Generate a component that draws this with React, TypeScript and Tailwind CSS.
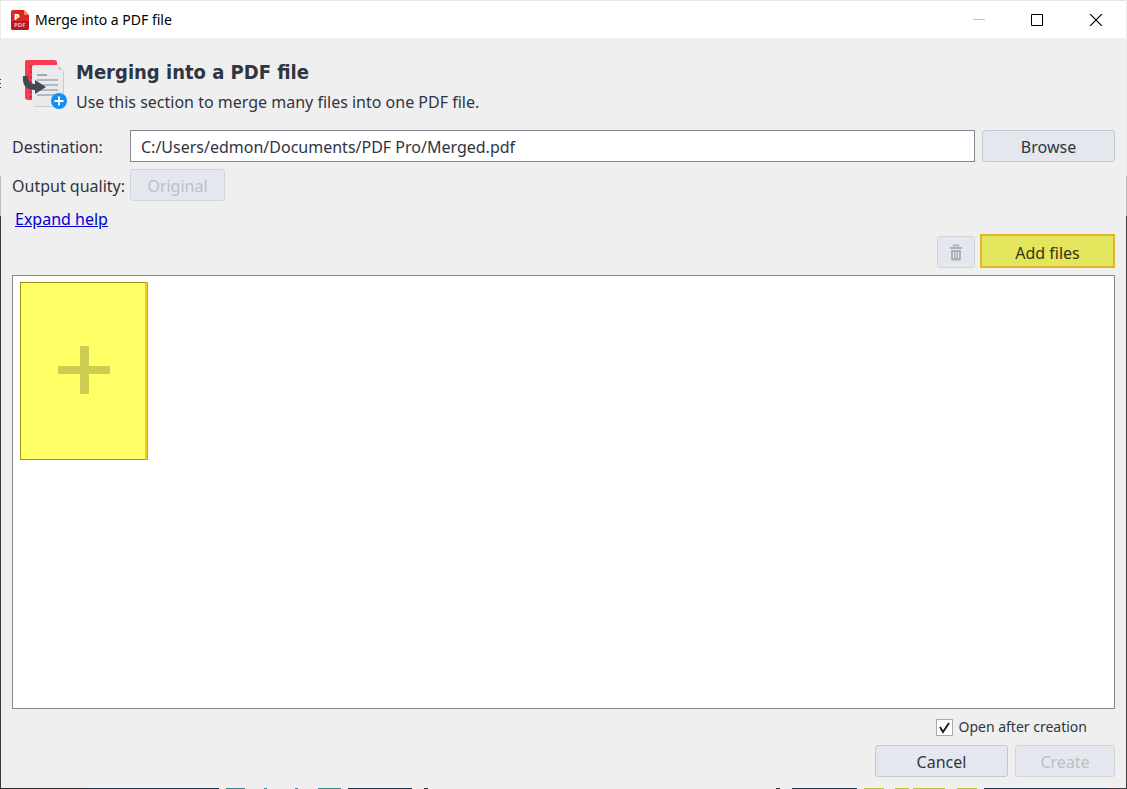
import { useState } from "react";

const buttonBase = "h-8 rounded-[3px] border pt-px text-base leading-6 text-center";
const buttonEnabled = "border-[#c3c8d2] bg-[#e4e7ed] text-[#2f3542] hover:bg-[#dadfe8]";
const buttonDisabled = "border-[#d0d5dc] bg-[#e4e7ed] text-[#bcc0c6]";

function AppIcon() {
  return (
    <svg width="18" height="20" viewBox="0 0 18 20" className="overflow-visible" aria-hidden="true">
      <path d="M2 0h11l5 5v13a2 2 0 0 1-2 2H2a2 2 0 0 1-2-2V2a2 2 0 0 1 2-2z" fill="#d9261f" />
      <path d="M0 11h18v7a2 2 0 0 1-2 2H2a2 2 0 0 1-2-2z" fill="#b8191c" />
      <path d="M13 0l5 5h-5z" fill="#f08a72" />
      <text x="3" y="10" fontSize="9" fontWeight="800" fill="#fff" fontFamily="Open Sans, sans-serif">P</text>
      <text x="3" y="17" fontSize="6" fontWeight="700" fill="#f0b4b4" fontFamily="Open Sans, sans-serif">PDF</text>
    </svg>
  );
}

function MergeIcon() {
  return (
    <svg width="46" height="52" viewBox="0 0 46 52" aria-hidden="true">
      <path d="M5 2h27a3 3 0 0 1 3 3v37H6a3 3 0 0 1-3-3V4a2 2 0 0 1 2-2z" fill="#f93a52" />
      <path d="M8.500 8v33" stroke="#c22a40" strokeWidth="2" strokeDasharray="2 3" />
      <path d="M13 8h24l5 5v33a3 3 0 0 1-3 3H13a2 2 0 0 1-2-2V10a2 2 0 0 1 2-2z" fill="#c9cbcd" />
      <path d="M12 7h24l5 5v33a3 3 0 0 1-3 3H12a2 2 0 0 1-2-2V9a2 2 0 0 1 2-2z" fill="#e8eaeb" />
      <path d="M36 7l5 5h-5z" fill="#cfd2d4" />
      <path d="M15 17h10" stroke="#a3a9ae" strokeWidth="2" />
      <path d="M15 22h21M15 27h21M15 32h21M15 37h21" stroke="#b4b9bd" strokeWidth="2" />
      <path d="M1 18c-1 9 3 14 12 14v4l11-7-11-7v4c-4 0-7-2-7-8z" fill="#3f4a54" />
      <circle cx="37" cy="43" r="8" fill="#1191f5" />
      <path d="M37 38.500v9M32.500 43h9" stroke="#fff" strokeWidth="2" />
    </svg>
  );
}

function TrashIcon() {
  return (
    <svg width="12" height="17" viewBox="0 0 12 17" className="mx-auto" fill="#acafb3" aria-hidden="true">
      <path d="M3 3V1.500a1 1 0 0 1 1-1h4a1 1 0 0 1 1 1V3h3v2H0V3zM4.500 3h3V2h-3z" fillRule="evenodd" />
      <path d="M1 6h10v9a1.500 1.500 0 0 1-1.500 1.500h-7A1.500 1.500 0 0 1 1 15zM3 8v6h1V8zm2.500 0v6h1V8zM8 8v6h1V8z" fillRule="evenodd" />
    </svg>
  );
}

function TitleBar() {
  return (
    <header className="flex h-[38px] items-center border-t border-[#e6e6e6] bg-white pl-2.5">
      <AppIcon />
      <span className="ml-1.5 font-['Noto_Sans',sans-serif] text-sm leading-5 text-black">Merge into a PDF file</span>
      <div className="ml-auto flex h-full">
        <button type="button" disabled aria-label="Minimize" className="flex w-[58px] items-center justify-center">
          <svg width="12" height="12" aria-hidden="true"><path d="M0 5.500h12" stroke="#bdbdbd" /></svg>
        </button>
        <button type="button" aria-label="Maximize" className="flex w-[58px] items-center justify-center">
          <svg width="12" height="12" fill="none" aria-hidden="true"><path d="M.5.5h11v11H.5z" stroke="#000" /></svg>
        </button>
        <button type="button" aria-label="Close" className="flex w-[60px] items-center justify-center">
          <svg width="12" height="12" aria-hidden="true"><path d="M0 0l12 12M12 0L0 12" stroke="#000" strokeWidth="1.200" /></svg>
        </button>
      </div>
    </header>
  );
}

// window behind the dialog, visible as a thin edge on each side
function SideEdge({ marks = false }: { marks?: boolean }) {
  return (
    <div className="flex w-px flex-none flex-col">
      <div className="flex h-44 flex-col items-start bg-[#ececec]">
        {marks && (
          <div className="mt-[79px] flex flex-col gap-[3px]">
            <i className="h-px w-px bg-[#333]" />
            <i className="h-px w-px bg-[#333]" />
            <i className="h-px w-px bg-[#333]" />
          </div>
        )}
      </div>
      <div className="h-10 bg-[#bcbcbe]" />
      <div className="flex-1 bg-[#3c3c3e]" />
    </div>
  );
}

function BottomEdge() {
  return (
    <div className="flex h-px flex-none overflow-hidden bg-[#efefef]">
      <i className="w-[88px] bg-[#2e2e2e]" />
      <i className="w-[131px] bg-[#1b3a52]" />
      <i className="ml-[7px] w-[19px] bg-[#41858a]" />
      <i className="ml-[19px] w-[3px] bg-[#41858a]" />
      <i className="ml-7 w-[3px] bg-[#41858a]" />
      <i className="ml-5 w-[23px] bg-[#41858a]" />
      <i className="ml-[7px] w-16 bg-[#1b3a52]" />
      <i className="ml-3 w-1 bg-[#333]" />
      <i className="ml-auto w-1 bg-[#333]" />
      <i className="ml-3 w-[65px] bg-[#1b3a52]" />
      <i className="ml-[7px] w-5 bg-[#b3c833]" />
      <i className="ml-[11px] w-[14px] bg-[#b3c833]" />
      <i className="ml-1 w-8 bg-[#b3c833]" />
      <i className="ml-3 w-5 bg-[#b3c833]" />
      <i className="ml-[7px] w-[124px] bg-[#1b3a52]" />
      <i className="w-[19px] bg-[#3c3c3e]" />
    </div>
  );
}

export default function App() {
  const [destination, setDestination] = useState("C:/Users/edmon/Documents/PDF Pro/Merged.pdf");
  const [openAfter, setOpenAfter] = useState(true);

  return (
    <div className="flex min-h-screen flex-col bg-[#efefef] font-['Noto_Sans',sans-serif] text-[#2f3542]">
      <div className="flex flex-1">
        <SideEdge marks />
        <div className="flex min-w-0 flex-1 flex-col">
          <TitleBar />

          <main className="flex flex-1 flex-col px-[11px] pb-[11px]">
            <div className="mt-5 flex gap-2 pl-2.5">
              <MergeIcon />
              <div>
                <h1 className="font-['DejaVu_Sans_Condensed','DejaVu_Sans',sans-serif] text-xl leading-7 font-bold">Merging into a PDF file</h1>
                <p className="mt-1 text-base leading-6">Use this section to merge many files into one PDF file.</p>
              </div>
            </div>

            <div className="mt-4 flex items-center">
              <label htmlFor="destination" className="w-[118px] flex-none pt-0.5 text-base leading-6">Destination:</label>
              <input
                id="destination"
                type="text"
                value={destination}
                onChange={(e) => setDestination(e.target.value)}
                className="h-8 min-w-0 flex-1 border border-[#868993] bg-white px-2.5 pt-0.5 text-base leading-6 outline-none"
              />
              <button type="button" className={`${buttonBase} ${buttonEnabled} ml-[7px] w-[133px]`}>Browse</button>
            </div>

            <div className="mt-[7px] flex items-center">
              <label htmlFor="quality" className="w-[118px] flex-none pt-0.5 text-base leading-6">Output quality:</label>
              <button id="quality" type="button" disabled className={`${buttonBase} ${buttonDisabled} w-[95px]`}>Original</button>
            </div>

            <a href="#help" className="mt-1.5 ml-[3px] self-start text-base leading-6 text-[#0000d4] underline">Expand help</a>

            <div className="mt-[3px] flex items-end justify-end gap-[5px]">
              <button type="button" disabled aria-label="Remove files" className={`${buttonBase} ${buttonDisabled} w-[38px]`}>
                <TrashIcon />
              </button>
              <button type="button" className="h-[34px] w-[135px] border-2 border-[#dfb52c] bg-[#e3e65c] pt-1 text-base leading-6 text-[#33360f]">
                Add files
              </button>
            </div>

            <section aria-label="Files" className="mt-[7px] min-h-48 flex-1 border border-[#84868a] bg-white p-[7px] pt-1.5">
              <div className="w-32 border-r border-[#a0a0a0]">
                <button
                  type="button"
                  aria-label="Add a file"
                  className="flex h-[178px] w-full items-center justify-center border border-r-2 border-[#a88f14] border-r-[#f5c822] bg-[#ffff66] pb-0.5 pl-0.5"
                >
                  <svg width="52" height="48" viewBox="0 0 52 48" fill="#cdcd52" aria-hidden="true">
                    <path d="M22 0h9v20h21v8H31v20h-9V28H0v-8h22z" />
                  </svg>
                </button>
              </div>
            </section>

            <div className="mt-2 flex justify-end pr-7">
              <label className="flex items-center gap-[5px] text-sm leading-5">
                <span className="grid h-[17px] w-[17px]">
                  <input
                    type="checkbox"
                    checked={openAfter}
                    onChange={(e) => setOpenAfter(e.target.checked)}
                    className="col-start-1 row-start-1 h-[17px] w-[17px] appearance-none border border-[#a9abb0] bg-white"
                  />
                  {openAfter && (
                    <svg width="17" height="17" fill="none" className="pointer-events-none col-start-1 row-start-1" aria-hidden="true">
                      <path d="M4 8l3 5 6-9" stroke="#1c1f26" strokeWidth="2" />
                    </svg>
                  )}
                </span>
                Open after creation
              </label>
            </div>

            <div className="mt-2 flex justify-end gap-[7px]">
              <button type="button" className={`${buttonBase} ${buttonEnabled} w-[133px]`}>Cancel</button>
              <button type="button" disabled className={`${buttonBase} ${buttonDisabled} w-[100px]`}>Create</button>
            </div>
          </main>
        </div>
        <SideEdge />
      </div>
      <BottomEdge />
    </div>
  );
}
